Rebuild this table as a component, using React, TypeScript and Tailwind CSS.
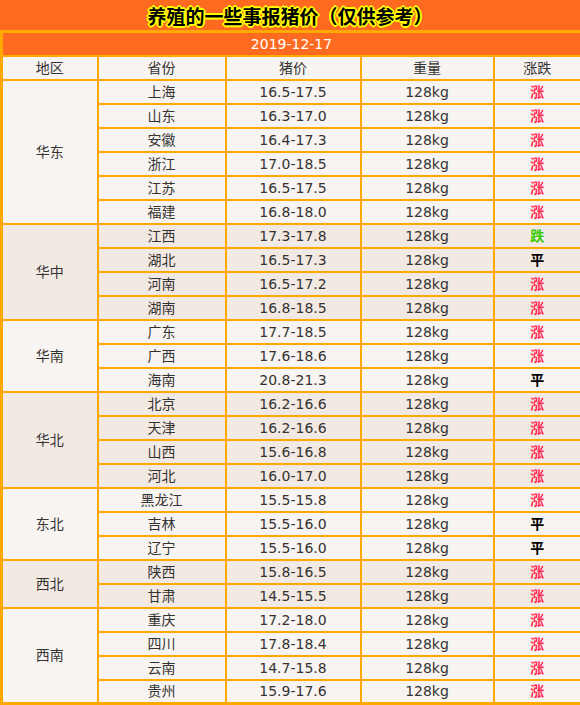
import React from 'react'

type Mark = '涨' | '跌' | '平'

const groups: { region: string; bg: string; rows: [string, string, Mark][] }[] = [
  {
    region: '华东',
    bg: 'bg-[#f8f4f1]',
    rows: [
      ['上海', '16.5-17.5', '涨'],
      ['山东', '16.3-17.0', '涨'],
      ['安徽', '16.4-17.3', '涨'],
      ['浙江', '17.0-18.5', '涨'],
      ['江苏', '16.5-17.5', '涨'],
      ['福建', '16.8-18.0', '涨'],
    ],
  },
  {
    region: '华中',
    bg: 'bg-[#f3e9e3]',
    rows: [
      ['江西', '17.3-17.8', '跌'],
      ['湖北', '16.5-17.3', '平'],
      ['河南', '16.5-17.2', '涨'],
      ['湖南', '16.8-18.5', '涨'],
    ],
  },
  {
    region: '华南',
    bg: 'bg-[#f8f4f1]',
    rows: [
      ['广东', '17.7-18.5', '涨'],
      ['广西', '17.6-18.6', '涨'],
      ['海南', '20.8-21.3', '平'],
    ],
  },
  {
    region: '华北',
    bg: 'bg-[#f3e9e3]',
    rows: [
      ['北京', '16.2-16.6', '涨'],
      ['天津', '16.2-16.6', '涨'],
      ['山西', '15.6-16.8', '涨'],
      ['河北', '16.0-17.0', '涨'],
    ],
  },
  {
    region: '东北',
    bg: 'bg-[#f8f4f1]',
    rows: [
      ['黑龙江', '15.5-15.8', '涨'],
      ['吉林', '15.5-16.0', '平'],
      ['辽宁', '15.5-16.0', '平'],
    ],
  },
  {
    region: '西北',
    bg: 'bg-[#f3e9e3]',
    rows: [
      ['陕西', '15.8-16.5', '涨'],
      ['甘肃', '14.5-15.5', '涨'],
    ],
  },
  {
    region: '西南',
    bg: 'bg-[#f8f4f1]',
    rows: [
      ['重庆', '17.2-18.0', '涨'],
      ['四川', '17.8-18.4', '涨'],
      ['云南', '14.7-15.8', '涨'],
      ['贵州', '15.9-17.6', '涨'],
    ],
  },
]

const markClass: Record<Mark, string> = {
  涨: 'text-[#ff2d55]',
  跌: 'text-[#33cc00]',
  平: 'text-black',
}

const cell = 'border-2 border-[#ffa800] h-[24px] p-0 text-center align-middle'

export default function App() {
  return (
    <div className="w-[580px] bg-white font-['DejaVu_Sans','Noto_Sans_CJK_SC',sans-serif] text-[14px] text-[#333]">
      {/* title */}
      <div className="h-[30px] bg-[#ff6a21] flex items-center justify-center">
        <span className="font-['Noto_Sans_CJK_SC',sans-serif] font-bold text-[19px] leading-none text-black [text-shadow:1px_1px_0_#ff0,-1px_-1px_0_#ff0,1px_-1px_0_#ff0,-1px_1px_0_#ff0,2px_0_0_#ff0,-2px_0_0_#ff0,0_2px_0_#ff0,0_-2px_0_#ff0]">
          养殖的一些事报猪价（仅供参考）
        </span>
      </div>

      <table className="w-[580px] border-collapse border-[3px] border-[#ffa800] table-fixed leading-none">
        <colgroup>
          <col className="w-[96px]" />
          <col className="w-[128px]" />
          <col className="w-[135px]" />
          <col className="w-[133px]" />
          <col className="w-[88px]" />
        </colgroup>
        <tbody>
          <tr>
            <td colSpan={5} className={`${cell} bg-[#ff6a21] text-white`}>
              2019-12-17
            </td>
          </tr>
          <tr className="bg-[#f8f4f1]">
            <td className={cell}>地区</td>
            <td className={cell}>省份</td>
            <td className={cell}>猪价</td>
            <td className={cell}>重量</td>
            <td className={cell}>涨跌</td>
          </tr>
          {groups.map((g) =>
            g.rows.map(([prov, price, mark], i) => (
              <tr key={prov} className={g.bg}>
                {i === 0 && (
                  <td rowSpan={g.rows.length} className={cell}>
                    {g.region}
                  </td>
                )}
                <td className={cell}>{prov}</td>
                <td className={cell}>{price}</td>
                <td className={cell}>128kg</td>
                <td className={`${cell} font-bold ${markClass[mark]}`}>{mark}</td>
              </tr>
            ))
          )}
        </tbody>
      </table>
    </div>
  )
}
